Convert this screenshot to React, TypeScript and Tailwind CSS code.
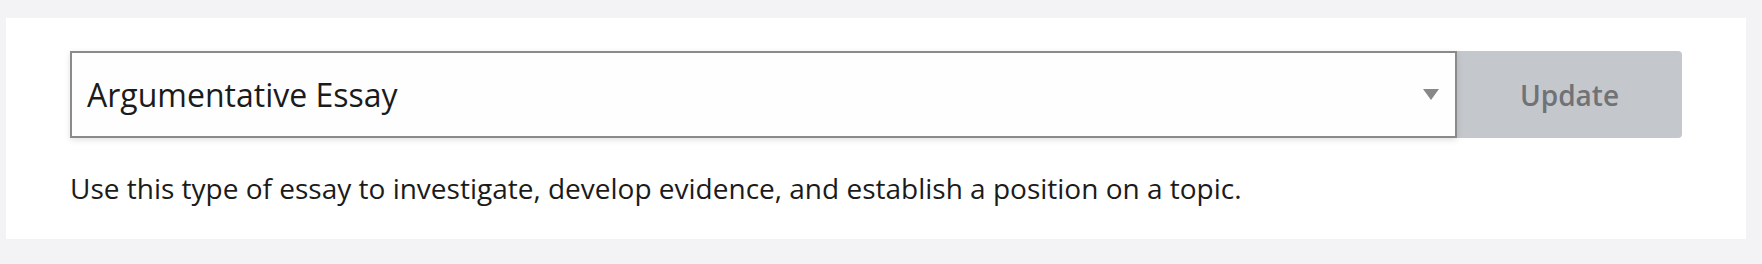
import React from 'react';

const App: React.FC = () => {
  return (
    <div className="min-h-[264px] w-full bg-[#f3f3f5] pt-[18px] pl-[6px] pr-[16px]" style={{ fontFamily: '"Open Sans", sans-serif' }}>
      <div className="w-[1740px] h-[221px] bg-white px-[64px] pt-[33px]">
        <div className="flex items-stretch h-[87px]">
          <div className="relative flex-1 flex items-center border-2 border-[#8a8a8a] bg-[#fefefe] shadow-[0_2px_6px_rgba(0,0,0,0.12)]">
            <span className="pl-[15px] text-[32px] text-[#1b1b1b]">Argumentative Essay</span>
            <svg className="absolute right-[16px] top-[36px]" width="16" height="12" viewBox="0 0 16 12">
              <polygon points="0,0 16,0 8,11" fill="#888888" />
            </svg>
          </div>
          <button className="w-[225px] bg-[#c4c8cc] rounded-r-[4px] text-[28px] font-semibold text-[#707275]">
            Update
          </button>
        </div>
        <p className="mt-[29px] text-[28px] leading-[42px] text-[#1b1b1b]">
          Use this type of essay to investigate, develop evidence, and establish a position on a topic.
        </p>
      </div>
    </div>
  );
};

export default App;
